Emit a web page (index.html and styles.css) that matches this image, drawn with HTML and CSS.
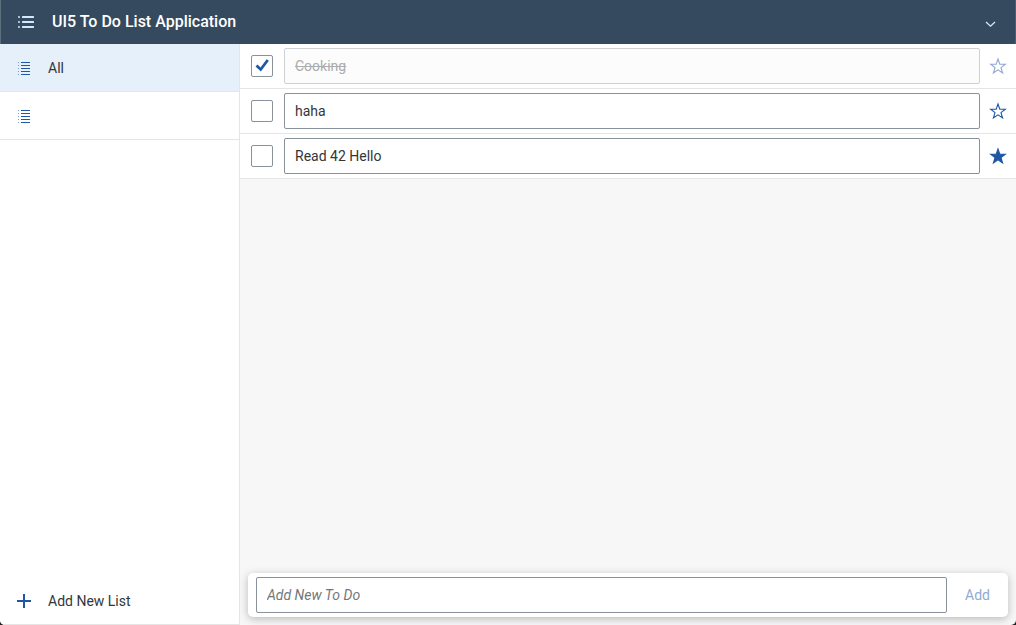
FILE: index.html
```
<!DOCTYPE html>
<html lang="en">
<head>
<meta charset="utf-8">
<title>UI5 To Do List Application</title>
<link rel="stylesheet" href="styles.css">
</head>
<body>
<div class="app">
  <header class="shell">
    <button class="icon-btn menu" aria-label="Toggle lists">
      <svg width="18" height="14" viewBox="0 0 18 14"><g fill="#a9bdd2"><rect x="1" y="1" width="2" height="2"/><rect x="1" y="6" width="2" height="2"/><rect x="1" y="11" width="2" height="2"/></g><g fill="#d1e8ff"><rect x="5" y="1" width="12" height="2" rx=".5"/><rect x="5" y="6" width="12" height="2" rx=".5"/><rect x="5" y="11" width="12" height="2" rx=".5"/></g></svg>
    </button>
    <h1 class="title">UI5 To Do List Application</h1>
    <button class="icon-btn more" aria-label="More">
      <svg width="12" height="8" viewBox="0 0 12 8"><path d="M2 2 6.5 6.2 11 2" fill="none" stroke="#d1e8ff" stroke-width="1.3"/></svg>
    </button>
  </header>
  <div class="body">
    <nav class="side">
      <ul class="lists">
        <li><a href="#" class="side-item selected">
          <svg class="side-icon" width="16" height="16" viewBox="0 0 16 16"><path d="M2 2.5h1M2 5.5h1M2 8.5h1M2 11.5h1M2 14.5h1" stroke="#7ba0d0"/><path d="M5 2.5h9M5 5.5h9M5 8.5h9M5 11.5h9M5 14.5h9" stroke="#2058a8"/></svg>
          <span>All</span></a></li>
        <li><a href="#" class="side-item" aria-label="Unnamed list">
          <svg class="side-icon" width="16" height="16" viewBox="0 0 16 16"><path d="M2 2.5h1M2 5.5h1M2 8.5h1M2 11.5h1M2 14.5h1" stroke="#7ba0d0"/><path d="M5 2.5h9M5 5.5h9M5 8.5h9M5 11.5h9M5 14.5h9" stroke="#2058a8"/></svg>
        </a></li>
      </ul>
      <button class="side-item add-list">
        <svg class="side-icon" width="16" height="16" viewBox="0 0 16 16"><path d="M1 8h14M8 1v14" stroke="#1f56a6" stroke-width="2"/></svg>
        <span>Add New List</span>
      </button>
    </nav>
    <main class="main">
      <ul class="todos">
        <li class="todo done">
          <input class="check" type="checkbox" checked aria-label="Cooking done">
          <input class="field" type="text" value="Cooking" disabled aria-label="To do">
          <button class="icon-btn star" disabled aria-label="Mark important"><svg width="18" height="18" viewBox="0 0 18 18"><path d="M9 2 10.8 7.2H16.3L12 10.6 13.6 16 9 12.8 4.4 16 6 10.6 1.7 7.2H7.2Z"/></svg></button>
        </li>
        <li class="todo">
          <input class="check" type="checkbox" aria-label="haha done">
          <input class="field" type="text" value="haha" aria-label="To do">
          <button class="icon-btn star" aria-label="Mark important"><svg width="18" height="18" viewBox="0 0 18 18"><path d="M9 2 10.8 7.2H16.3L12 10.6 13.6 16 9 12.8 4.4 16 6 10.6 1.7 7.2H7.2Z"/></svg></button>
        </li>
        <li class="todo">
          <input class="check" type="checkbox" aria-label="Read 42 Hello done">
          <input class="field" type="text" value="Read 42 Hello" aria-label="To do">
          <button class="icon-btn star on" aria-label="Unmark important"><svg width="18" height="18" viewBox="0 0 18 18"><path d="M9 2 10.8 7.2H16.3L12 10.6 13.6 16 9 12.8 4.4 16 6 10.6 1.7 7.2H7.2Z"/></svg></button>
        </li>
      </ul>
      <form class="new">
        <input class="field" type="text" placeholder="Add New To Do" aria-label="Add New To Do">
        <button class="add" type="submit" disabled>Add</button>
      </form>
    </main>
  </div>
</div>
</body>
</html>
```
FILE: styles.css
```
* { box-sizing: border-box; }
body { margin: 0; background: #222; color: #32363a; font: 14px/20px Roboto, "Liberation Sans", sans-serif; }
button, input { font: inherit; color: inherit; margin: 0; }
button { border: 0; padding: 0; background: none; }
ul { margin: 0; padding: 0; list-style: none; }
svg { display: block; }

.app { display: flex; flex-direction: column; height: 100vh; overflow: hidden; background: #f7f7f7; border-radius: 0 0 5px 5px; }
.shell { display: flex; align-items: center; height: 44px; flex: none; padding: 0 16px 0 8px; background: #354a5f; color: #fff; box-shadow: inset 1px 0 #5d6e7f, inset -1px 0 #4c5f72; }
.icon-btn { display: flex; align-items: center; justify-content: center; width: 36px; height: 36px; flex: none; }
.title { margin: 0 0 0 8px; flex: 1; font-size: 16px; line-height: 20px; font-weight: 500; }
.more { width: 20px; padding-top: 4px; }

.body { display: flex; flex: 1; min-height: 0; }
.side { display: flex; flex-direction: column; justify-content: space-between; width: 240px; flex: none; background: #fff; border-right: 1px solid #e5e5e5; }
.side-item { display: flex; align-items: center; gap: 16px; width: 100%; height: 48px; padding: 0 16px; border-bottom: 1px solid #e5e5e5; color: #32363a; text-align: left; text-decoration: none; }
.selected { background: #e5f0fa; }

.main { display: flex; flex-direction: column; justify-content: space-between; flex: 1; min-width: 0; }
.todo { display: flex; align-items: center; padding: 4px 0 4px 11px; background: #fff; border-bottom: 1px solid #e5e5e5; }
.check { appearance: none; width: 22px; height: 22px; margin-right: 11px; flex: none; border: 1px solid #89919a; border-radius: 2px; background: #fff; }
.check:checked { background: #fff url("data:image/svg+xml,%3Csvg xmlns='http://www.w3.org/2000/svg' viewBox='0 0 20 20'%3E%3Cpath d='M4.5 9.5 8.7 13.5 15.8 4' fill='none' stroke='%231f56a6' stroke-width='2.8'/%3E%3C/svg%3E") center / 20px no-repeat; }
.field { flex: 1; min-width: 0; height: 36px; padding: 0 10px; border: 1px solid #89919a; border-radius: 2px; background: #fff; outline: 0; }
.field::placeholder { color: #74777a; font-style: italic; opacity: 1; }
.done .field { color: #aaacae; border-color: #cfd2d5; background: #fcfcfc; text-decoration: line-through; }
.star path { fill: none; stroke: #1f56a6; stroke-width: 1.1; }
.star.on path { fill: #1f56a6; }
.star:disabled { opacity: .5; }

.new { display: flex; align-items: center; margin: 8px; padding: 4px 0 4px 8px; border-radius: 5px; background: #fff; box-shadow: 0 2px 8px rgba(0, 0, 0, .25); }
.add { width: 61px; height: 36px; color: #8fabd3; }
```
